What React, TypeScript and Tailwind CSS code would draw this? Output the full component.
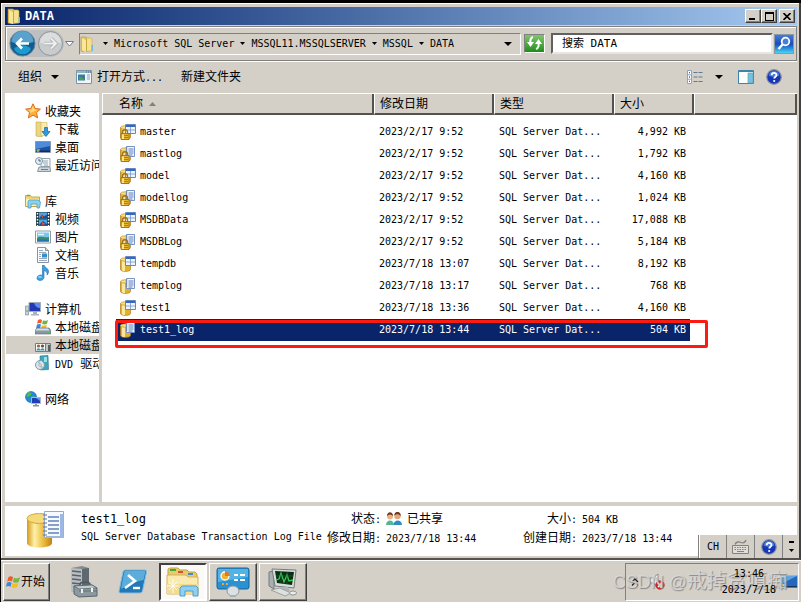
import type { ReactNode } from 'react';

type IconProps = { className?: string };

const files = [
  { name: 'master', date: '2023/2/17 9:52', size: '4,992 KB', log: false, locked: true },
  { name: 'mastlog', date: '2023/2/17 9:52', size: '1,792 KB', log: true, locked: true },
  { name: 'model', date: '2023/2/17 9:52', size: '4,160 KB', log: false, locked: true },
  { name: 'modellog', date: '2023/2/17 9:52', size: '1,024 KB', log: true, locked: true },
  { name: 'MSDBData', date: '2023/2/17 9:52', size: '17,088 KB', log: false, locked: true },
  { name: 'MSDBLog', date: '2023/2/17 9:52', size: '5,184 KB', log: true, locked: true },
  { name: 'tempdb', date: '2023/7/18 13:07', size: '8,192 KB', log: false, locked: false },
  { name: 'templog', date: '2023/7/18 13:17', size: '768 KB', log: true, locked: false },
  { name: 'test1', date: '2023/7/18 13:36', size: '4,160 KB', log: false, locked: false },
  { name: 'test1_log', date: '2023/7/18 13:44', size: '504 KB', log: true, locked: false },
];

const crumbs = ['Microsoft SQL Server', 'MSSQL11.MSSQLSERVER', 'MSSQL', 'DATA'];

const raised =
  'border border-t-white border-l-white border-r-[#404040] border-b-[#404040] bg-[#d4d0c8] shadow-[inset_-1px_-1px_0_#808080]';

const Latin = ({ children }: { children: ReactNode }) => (
  <span className="text-[10px]">{children}</span>
);

const Caret = ({ className = '' }: IconProps) => (
  <svg viewBox="0 0 8 4" className={`h-1 w-2 shrink-0 ${className}`} aria-hidden>
    <path d="M0 0h8L4 4z" fill="currentColor" />
  </svg>
);

const SmallCaret = () => (
  <svg width="5" height="3" viewBox="0 0 5 3" className="shrink-0" aria-hidden>
    <path d="M0 0h5L2.500 3z" fill="#000" />
  </svg>
);

const FolderIcon = () => (
  <svg width="16" height="16" viewBox="0 0 16 16" className="shrink-0" aria-hidden>
    <path d="M1 1h5l1 1v13l-2 1-4-1z" fill="#e3c65c" stroke="#b8942f" strokeWidth=".6" />
    <path d="M6 2h5l1 1v12l-6 .5z" fill="#f5e08c" stroke="#c9a440" strokeWidth=".6" />
    <path d="M2 2l4 2v12l-4-1.500z" fill="#f8e798" />
    <path d="M6.500 3v12" stroke="#b8942f" strokeWidth=".7" />
    <path d="M11.500 9h1.500v6h-1.500z" fill="#6cb7e4" />
  </svg>
);

const DbIcon = ({ log, locked }: { log: boolean; locked: boolean }) => (
  <svg width="16" height="16" viewBox="0 0 16 16" className="shrink-0" aria-hidden>
    <path d="M.5 3.500v10c0 2.500 10 2.500 10 0v-10z" fill="#e3b02f" stroke="#b07d13" strokeWidth=".7" />
    <path d="M2 4v10.500c1 .5 2 .5 3 .5V4z" fill="#fbe79a" />
    <ellipse cx="5.500" cy="3.500" rx="5" ry="1.800" fill="#f7dc80" stroke="#bd8c20" strokeWidth=".6" />
    {log ? (
      <>
        <path d="M6.500.5h8v10h-8z" fill="#f4f8ff" stroke="#7593c9" />
        <path d="M8.500 3h5M8.500 5h5M8.500 7h5M8.500 9h4" stroke="#4a6fae" strokeWidth=".9" />
        <path d="M5.500 2h2M5.500 4h2M5.500 6h2M5.500 8h2" stroke="#777" strokeWidth=".7" />
      </>
    ) : (
      <>
        <path d="M5.500.5h10v9h-10z" fill="#eef5ff" stroke="#6686be" />
        <path d="M6 1h9v2H6z" fill="#3768c1" />
        <path d="M10.500 3v6M6 6h9" stroke="#7f9fd0" strokeWidth=".9" />
      </>
    )}
    {locked && (
      <>
        <path d="M2.500 10V8c0-3 5-3 5 0v2" fill="none" stroke="#a07414" strokeWidth="1.400" />
        <path d="M1 9.500h8v6H1z" fill="#e9b52f" stroke="#94690f" strokeWidth=".8" />
        <path d="M2 10.500h2v4.500H2z" fill="#fbe48a" />
        <path d="M4 11.500h4M4 13.500h4" stroke="#94690f" strokeWidth=".7" />
      </>
    )}
  </svg>
);

const StarIcon = () => (
  <svg width="16" height="16" viewBox="0 0 16 16" aria-hidden>
    <path d="M8 .8l2.200 4.700 5.200.6-3.900 3.500 1.100 5.300L8 12.200l-4.600 2.700 1.100-5.300L.6 6.100l5.200-.6z" fill="#ffae38" stroke="#e56a1c" />
    <path d="M8 3l1.300 3.500 3 .5L5 10l.4-2L3 7l3.500-.5z" fill="#ffdc78" />
  </svg>
);

const DownloadIcon = () => (
  <svg width="16" height="16" viewBox="0 0 16 16" aria-hidden>
    <path d="M1 1h5l1 1v14l-6-1z" fill="#ecd680" stroke="#c6a74a" strokeWidth=".6" />
    <path d="M6 1.500h6V14l-6 1z" fill="#faecb2" stroke="#d0b45b" strokeWidth=".6" />
    <path d="M9.500 6.500h3v4h2.500L11 15.500l-4-5h2.500z" fill="#2f9ae0" stroke="#1665a6" strokeWidth=".7" />
  </svg>
);

const DesktopIcon = () => (
  <svg width="16" height="14" viewBox="0 0 16 14" aria-hidden>
    <path d="M.5 1.500h15v11H.5z" fill="#1d53a7" stroke="#8497ae" />
    <path d="M1 2h14v4L1 9z" fill="#4e8bd8" />
    <path d="M1 10.500h14v1.500H1z" fill="#1b2d55" />
    <circle cx="3" cy="10.500" r="1.500" fill="#69c46c" />
    <path d="M3 9h2v1.500H3z" fill="#f06b2d" />
  </svg>
);

const RecentIcon = () => (
  <svg width="16" height="16" viewBox="0 0 16 16" aria-hidden>
    <path d="M6 1.500h9v8H6z" fill="#f4f8fb" stroke="#96a5b2" />
    <path d="M8 4h5M8 6h5M9 8h4" stroke="#7792a8" strokeWidth=".8" />
    <path d="M4 10h11l.5 4.500h-13z" fill="#cdd7df" stroke="#8a97a2" />
    <path d="M6 12.500h7" stroke="#6d7c87" />
    <circle cx="4" cy="4" r="3.500" fill="#e4edf4" stroke="#8195a6" />
    <path d="M4 2v2h2" fill="none" stroke="#49647a" />
  </svg>
);

const LibraryIcon = () => (
  <svg width="16" height="16" viewBox="0 0 16 16" aria-hidden>
    <path d="M.5 2.500h5l1 1.500h8v9.500H.5z" fill="#f2d777" stroke="#c7a64a" />
    <path d="M2 2.500h3" stroke="#5fb54a" strokeWidth="1.500" />
    <path d="M1 6h13v7H1z" fill="#fcefb8" />
    <path d="M4 7h9l2.500 2-1 6h-2.500v-4H6v4H3V9z" fill="#8dd1f2" stroke="#499fc9" strokeWidth=".8" />
  </svg>
);

const VideoIcon = () => (
  <svg width="16" height="16" viewBox="0 0 16 16" aria-hidden>
    <path d="M1 1h14v14H1z" fill="#24404e" />
    <path d="M4 1.500h8v6H4zM4 8.500h8v6H4z" fill="#4aa7df" />
    <path d="M4 7.500l3-4 2 2 3-2v4zM4 14l4-4 4 3v1.500H4z" fill="#1c4d91" />
    <path d="M5 3l3 2v2.500zM7 11l4 2-4 1z" fill="#e2522b" />
    <path d="M2.500 2v13M13.500 2v13" stroke="#fff" strokeWidth="1.400" strokeDasharray="1.500 1.500" />
  </svg>
);

const PictureIcon = () => (
  <svg width="16" height="14" viewBox="0 0 16 14" aria-hidden>
    <path d="M.5 1h15v12H.5z" fill="#fff" stroke="#8e9aa3" />
    <path d="M2 2.500h12v9H2z" fill="#79c6ed" />
    <path d="M2 8c3-3 6 0 12-1v4.500H2z" fill="#3b8a69" />
    <path d="M2 9.500c4-1 8 1 12 0v2H2z" fill="#2476ae" />
    <path d="M3 4.500h6" stroke="#e8f8ff" strokeWidth="1.500" />
  </svg>
);

const DocumentIcon = () => (
  <svg width="16" height="16" viewBox="0 0 16 16" aria-hidden>
    <path d="M2.500.5h8l3 3v12h-11z" fill="#fafcff" stroke="#8594a2" />
    <path d="M10.500.5v3h3" fill="#ccd6de" stroke="#8594a2" />
    <path d="M4 3.500h4M4 5.500h7M4 7.500h2M4 9.500h2M4 11.500h8M4 13.500h8" stroke="#8093a7" strokeWidth=".8" />
    <path d="M7 6.500h5v4H7z" fill="#3690c8" />
  </svg>
);

const MusicIcon = () => (
  <svg width="16" height="16" viewBox="0 0 16 16" aria-hidden>
    <path d="M7.500 0h1.500c.5 3 5 3 4.500 7-.2 1.500-1 2.500-1.500 3 .8-3-1.500-4-3-4.500v7c0 3.500-7 4-7 .7C2 10.500 5 9.500 7.500 10.200z" fill="#35a3e3" stroke="#1c6bac" strokeWidth=".6" />
    <ellipse cx="5" cy="12" rx="2" ry="1" fill="#8ed5f8" />
  </svg>
);

const ComputerIcon = () => (
  <svg width="16" height="16" viewBox="0 0 16 16" aria-hidden>
    <path d="M.5 5h3v9h-3z" fill="#c7d0da" stroke="#82909e" strokeWidth=".7" />
    <path d="M1 10h2" stroke="#45b946" />
    <path d="M4 1.500h11.500v9H4z" fill="#2439b4" stroke="#a1adbb" />
    <path d="M9 2h6v5c-3 0-5-2-6-5z" fill="#5f8cf1" />
    <path d="M8 11h4v2H8zM6 13h8v1.500H6z" fill="#aab4bf" />
  </svg>
);

const Flag = ({ className = 'h-4 w-4' }: IconProps) => (
  <svg viewBox="0 0 16 16" className={`shrink-0 ${className}`} aria-hidden>
    <path d="M2.500 3c2-1.500 3.500-1.200 5 0L6.300 7.500c-1.700-1-3-1-5 .2z" fill="#ee5b28" />
    <path d="M8.500 3.500c2 1 4 1 6.500-.5l-1.300 4.700c-2 1.300-4.200 1.300-6.400.3z" fill="#76b93e" />
    <path d="M1 8.800c2-1.300 3.500-1 5-.1L4.800 13C3.300 12 2 12 0 13z" fill="#3d86d9" />
    <path d="M7 9.200c2.200 1 4.300.8 6.400-.4L12 13.300c-2 1.400-4.200 1.200-6.300.2z" fill="#f9bd24" />
  </svg>
);

const SystemDriveIcon = () => (
  <svg width="16" height="16" viewBox="0 0 16 16" aria-hidden>
    <path d="M3 1c1.500-1 3-1 4 0l-.8 3.500C5 3.700 3.500 3.700 2 4.500z" fill="#ec602a" />
    <path d="M8 1.300c1.500.8 3 .8 5-.3l-1 3.700c-1.500 1-3.500.8-4.900.1z" fill="#71b442" />
    <path d="M2 5.500c1.500-.8 3-.8 4 0L5.200 9 1 9.500z" fill="#3c88d5" />
    <path d="M6.900 6c1.500.8 3.400.7 4.900-.2L11 10H6z" fill="#f5bc2d" />
    <path d="M2 9h12l2 2.500v3.500H0v-3.500z" fill="#8998a4" stroke="#596a76" strokeWidth=".6" />
    <path d="M2 9.500h11l1.500 2h-14z" fill="#d4dde3" />
    <path d="M12 13h2" stroke="#41d347" strokeWidth="1.500" />
  </svg>
);

const SharedDriveIcon = () => (
  <svg width="16" height="16" viewBox="0 0 16 16" aria-hidden>
    <path d="M9 6.500h6.500v8H9z" fill="#bfc6c7" stroke="#747e80" />
    <path d="M13 8h2v6h-2z" fill="#56605c" />
    <path d="M.5 6.500h10v8H.5z" fill="#f9fbfa" stroke="#6e7f80" />
    <circle cx="3.500" cy="9" r="1.600" fill="#976044" />
    <circle cx="7.500" cy="9" r="1.600" fill="#77442f" />
    <path d="M1.500 13.500c0-3 4-3 4 0zM5.500 13.500c0-3 4-3 4 0z" fill="#4697a1" />
  </svg>
);

const DvdIcon = () => (
  <svg width="16" height="16" viewBox="0 0 16 16" aria-hidden>
    <path d="M5 1l8-.5.5 14-8 .5z" fill="#39a8bd" stroke="#1b7388" strokeWidth=".6" />
    <path d="M9 2h3v5H9z" fill="#9ae0e5" />
    <circle cx="5" cy="10" r="4.500" fill="#dce4e9" stroke="#8498a5" />
    <path d="M5 10L2 6.500 5 6zM5 10l3.500 2L6 14z" fill="#9fc8de" />
    <circle cx="5" cy="10" r="1.300" fill="#fff" stroke="#8498a5" strokeWidth=".7" />
  </svg>
);

const NetworkIcon = () => (
  <svg width="16" height="16" viewBox="0 0 16 16" aria-hidden>
    <circle cx="6" cy="6" r="5.500" fill="#2389db" stroke="#1c5c9c" strokeWidth=".6" />
    <path d="M3 1.500c3-1 4 1 3 2.500L3 6 1 5zM6 6c3-2 5 0 4 2L7 11z" fill="#53bd42" />
    <path d="M6.500 6.500h9v6h-9z" fill="#1d3fb8" stroke="#aeb9c6" />
    <path d="M10 13h2v1h2v1.500H8V14h2z" fill="#8794a2" />
    <path d="M11 7h4v3z" fill="#6496ef" />
  </svg>
);

const places = [
  {
    label: '收藏夹',
    icon: <StarIcon />,
    items: [
      { label: '下载', icon: <DownloadIcon /> },
      { label: '桌面', icon: <DesktopIcon /> },
      { label: '最近访问的位置', icon: <RecentIcon /> },
    ],
  },
  {
    label: '库',
    icon: <LibraryIcon />,
    items: [
      { label: '视频', icon: <VideoIcon /> },
      { label: '图片', icon: <PictureIcon /> },
      { label: '文档', icon: <DocumentIcon /> },
      { label: '音乐', icon: <MusicIcon /> },
    ],
  },
  {
    label: '计算机',
    icon: <ComputerIcon />,
    items: [
      { label: '本地磁盘', icon: <SystemDriveIcon /> },
      { label: '本地磁盘', icon: <SharedDriveIcon />, active: true },
      { label: <><Latin>DVD</Latin> 驱动器</>, icon: <DvdIcon /> },
    ],
  },
  { label: '网络', icon: <NetworkIcon />, items: [] },
];

const HelpIcon = ({ className = 'h-4 w-4' }: IconProps) => (
  <svg viewBox="0 0 16 16" className={className} aria-hidden>
    <circle cx="8" cy="8" r="7.300" fill="#1736b5" stroke="#8d949f" strokeWidth="1.200" />
    <path d="M2.500 6.500a5.600 5.600 0 0 1 11 0c-3 1.500-7 2-11 0z" fill="#4d7ce2" />
    <path d="M5.700 6.200c0-3 4.800-3 4.800-.2 0 1.700-2.300 1.700-2.300 3.600" fill="none" stroke="#fff" strokeWidth="1.800" />
    <circle cx="8.200" cy="12" r="1.100" fill="#fff" />
  </svg>
);

const UsersIcon = () => (
  <svg width="16" height="14" viewBox="0 0 16 14" aria-hidden>
    <path d="M0 13c0-6 8-6 8 0z" fill="#55b596" />
    <path d="M7.500 13c0-6 8.500-6 8.500 0z" fill="#2f8bc3" />
    <circle cx="4" cy="4.500" r="3" fill="#e9b48c" />
    <circle cx="11.500" cy="4" r="3.200" fill="#e2a67b" />
    <path d="M1 4c0-5 6-5 6 0-2-2-4-2-6 0zM8.300 3.500c0-5 6.500-5 6.500.5-2-2-4-2.500-6.500-.5z" fill="#6f3a22" />
  </svg>
);

const LogFileIcon = () => (
  <svg width="39" height="40" viewBox="0 0 39 40" className="shrink-0" aria-hidden>
    <defs>
      <linearGradient id="gold">
        <stop offset="0" stopColor="#d49a1d" />
        <stop offset=".3" stopColor="#fff0a6" />
        <stop offset=".7" stopColor="#e8b635" />
        <stop offset="1" stopColor="#bd8115" />
      </linearGradient>
    </defs>
    <path d="M1 9v24c0 6 25 6 25 0V9z" fill="url(#gold)" />
    <ellipse cx="13.500" cy="8.500" rx="12.500" ry="5" fill="#f5da7b" stroke="#d5a83a" />
    <path d="M18.500 1.500h19v26h-19z" fill="#f6f9ff" stroke="#8fabd5" />
    <path d="M34 4h3.500v24H20v-2h14z" fill="#9db8e2" />
    <path d="M22 7h11M22 11h11M22 15h11M22 19h11M22 23h11" stroke="#6382b5" strokeWidth="1.500" />
    <path d="M17 5h4M17 9h4M17 13h4M17 17h4M17 21h4M17 25h4" stroke="#6b7280" />
  </svg>
);

const ServerManagerIcon = () => (
  <svg width="30" height="32" viewBox="0 0 30 32" aria-hidden>
    <path d="M2 2l11-2 7 2v23l-7 3-11-3z" fill="#858b90" />
    <path d="M2 2l11 1v24L2 25z" fill="#b7bdc0" />
    <path d="M3 5l9 1M3 9l9 1M3 13l9 1M3 17l9 1" stroke="#596168" strokeWidth="1.500" />
    <path d="M13 3l7-1v23l-7 2z" fill="#5f686e" />
    <path d="M4 21h3" stroke="#50bc59" strokeWidth="1.500" />
    <path d="M11 20v-2c0-2 10-3 10 0v2" fill="none" stroke="#4f5961" strokeWidth="1.600" />
    <path d="M5 20l18-1 5 3v8l-18 1-5-3z" fill="#8c999f" stroke="#5a676f" />
    <path d="M5 20l5 3 18-1-5-3zM10 25h18" fill="#c3cbce" stroke="#59666e" strokeWidth=".8" />
    <path d="M13 23v4M23 22v4" stroke="#eef2f2" strokeWidth="2" />
  </svg>
);

const PowerShellIcon = () => (
  <svg width="30" height="26" viewBox="0 0 30 26" aria-hidden>
    <path d="M7 1h20q2 0 1.500 2l-4 19q-.5 2-2.500 2H2.500q-2 0-1.500-2L5 3q.5-2 2-2z" fill="#2179b8" stroke="#87bddd" />
    <path d="M7 2h20.500l-2 9C18 12 11 15 3 20L6 4z" fill="#5baedb" />
    <path d="M10 6l7 6-10 7" fill="none" stroke="#fff" strokeWidth="2.600" />
    <path d="M15 19h7" stroke="#fff" strokeWidth="2.400" />
  </svg>
);

const ExplorerIcon = () => (
  <svg width="34" height="30" viewBox="0 0 34 30" aria-hidden>
    <path d="M2 5V2l2-1h8l2 2h7l2 2h6l2 2v18H2z" fill="#e8cc6c" stroke="#c4a147" />
    <path d="M4 3h6" stroke="#3caa41" strokeWidth="2" />
    <path d="M12 5h5" stroke="#db4c39" strokeWidth="2" />
    <path d="M22 7h5" stroke="#3d8bd0" strokeWidth="2" />
    <path d="M1 8h19l2 2h10v17H1z" fill="#fbeab0" stroke="#d1b15c" />
    <path d="M1 17h31v10H1z" fill="#f3dc90" />
    <path d="M14 29v-8l2-2h14l2 2v8h-5v-5h-8v5z" fill="#8fd0f0" stroke="#4a9fcb" />
    <path d="M7 12v14M1 19h12M3 15l8 8M11 15l-8 8" stroke="#fff" strokeWidth=".9" />
  </svg>
);

const ControlPanelIcon = () => (
  <svg width="34" height="30" viewBox="0 0 34 30" aria-hidden>
    <rect x="1" y="1" width="32" height="21" rx="2" fill="#2992d2" stroke="#176299" />
    <path d="M2 2h30v8L2 15z" fill="#55b2e5" />
    <circle cx="9" cy="9" r="4" fill="#f2b22d" stroke="#fff" strokeWidth="1.300" />
    <path d="M9 9V4a5 5 0 0 1 5 5z" fill="#e57729" />
    <path d="M18 8h4M18 13h4M24 8h5M24 13h5" stroke="#fff" strokeWidth="2" />
    <path d="M6 17h2M10 17h2" stroke="#f7a51e" strokeWidth="2" />
    <ellipse cx="17" cy="24" rx="6" ry="5" fill="#dce1e5" stroke="#8d989f" />
    <path d="M14 28h6v2h-6z" fill="#a9b1b7" />
  </svg>
);

const MonitorIcon = () => (
  <svg width="32" height="30" viewBox="0 0 32 30" aria-hidden>
    <path d="M2 5l5-1v18l-5-3z" fill="#aab0b2" stroke="#737b7d" />
    <path d="M5 2l24 1-2 18-19-2z" fill="#d9dddb" stroke="#747d7b" />
    <path d="M8 4l19 1-2 13-15-2z" fill="#092d16" />
    <path d="M9 13l3-1 2-6 3 9 3-7 2 6 4-1" fill="none" stroke="#36ce50" strokeWidth="1.300" />
    <path d="M9 9h17M14 5v11M20 5v12" stroke="#237038" strokeWidth=".6" />
    <path d="M15 20h6l2 4-5 3-6-3z" fill="#b1b7b7" />
    <path d="M4 23l9-2 11 5-6 3z" fill="#dde0df" stroke="#8c9493" strokeWidth=".8" />
    <ellipse cx="26" cy="26" rx="3.500" ry="2" fill="#e9eceb" stroke="#8c9493" />
  </svg>
);

const TitleBar = () => (
  <div className="flex h-[18px] items-center bg-linear-to-r from-[#0a246a] to-[#a6caf0] pr-0.5 pl-0.5 text-white">
    <FolderIcon />
    <h1 className="flex-1 pl-0.5 text-xs leading-[18px] font-bold">DATA</h1>
    <button type="button" aria-label="最小化" className={`flex h-3.5 w-4 items-end pb-0.5 pl-[3px] ${raised}`}>
      <span className="h-0.5 w-1.5 bg-black" />
    </button>
    <button type="button" aria-label="最大化" className={`flex h-3.5 w-4 items-center justify-center ${raised}`}>
      <span className="h-[9px] w-[9px] border border-t-2 border-black" />
    </button>
    <button type="button" aria-label="关闭" className={`ml-0.5 flex h-3.5 w-4 items-center justify-center ${raised}`}>
      <svg width="8" height="7" viewBox="0 0 8 7" aria-hidden>
        <path d="M.5 0l7 7M7.500 0l-7 7" stroke="#000" strokeWidth="1.600" />
      </svg>
    </button>
  </div>
);

const AddressBar = () => (
  <div className="mt-px flex h-[35px] items-center border border-[#808080] pr-0.5 pl-[3px] shadow-[inset_1px_1px_0_#fff,0_1px_0_#fff]">
    <div className="flex rounded-full bg-[#bdbfc2]">
      <button type="button" aria-label="后退">
        <svg width="27" height="27" viewBox="0 0 27 27" aria-hidden>
          <circle cx="13.500" cy="13.500" r="12.500" fill="#105b8f" stroke="#65839a" />
          <path d="M2.500 12a11 11 0 0 1 22 0c-7 2-15 2-22 0z" fill="#5aa2cb" />
          <path d="M5 19c4-5 13-5 17 0-3 7-14 7-17 0z" fill="#1d9bd1" />
          <path d="M20 13.500H9M13 8.500l-5 5 5 5" fill="none" stroke="#fff" strokeWidth="2.600" />
        </svg>
      </button>
      <button type="button" aria-label="前进" className="ml-px">
        <svg width="27" height="27" viewBox="0 0 27 27" aria-hidden>
          <circle cx="13.500" cy="13.500" r="12" fill="#c9cbcc" stroke="#8e979e" />
          <path d="M3 13a10.500 10.500 0 0 1 21 0z" fill="#dcdddd" />
          <path d="M7 13.500h11M14 8.500l5 5-5 5" fill="none" stroke="#a6abae" strokeWidth="3.600" />
          <path d="M7 13.500h11M14 8.500l5 5-5 5" fill="none" stroke="#eeefef" strokeWidth="2" />
        </svg>
      </button>
    </div>
    <button type="button" aria-label="最近的页面" className="ml-px">
      <svg width="9" height="6" viewBox="0 0 9 6" aria-hidden>
        <path d="M.5.5h8l-4 4.500z" fill="#fff" stroke="#6f7c90" />
      </svg>
    </button>
    <div className="ml-[5px] flex h-[22px] flex-1 items-center border border-t-[#808080] border-r-white border-b-white border-l-[#808080] pr-2">
      <FolderIcon />
      <nav aria-label="地址" className="flex flex-1 items-center pl-px">
        {crumbs.map((crumb) => (
          <span key={crumb} className="flex items-center">
            <span className="flex w-[17px] justify-center">
              <SmallCaret />
            </span>
            <a href="#" className="text-[10px] whitespace-nowrap">
              {crumb}
            </a>
          </span>
        ))}
      </nav>
      <button type="button" aria-label="上一个位置">
        <Caret />
      </button>
    </div>
    <button
      type="button"
      aria-label="刷新"
      className="ml-[3px] flex h-[19px] w-[21px] items-center justify-center border border-t-[#808080] border-r-white border-b-white border-l-[#808080] bg-linear-to-b from-[#80c56e] to-[#159012]"
    >
      <svg width="17" height="15" viewBox="0 0 17 15" aria-hidden>
        <path d="M7 1C4 2 4 4 4.500 7M10 13c3-1 3-3 2.500-6" fill="none" stroke="#fff" strokeWidth="2" />
        <path d="M1 6h7l-3.500 5zM9 8h7l-3.500-5z" fill="#fff" />
      </svg>
    </button>
    <input
      type="text"
      aria-label="搜索 DATA"
      placeholder="搜索 DATA"
      className="ml-1.5 h-[21px] w-[222px] border-2 border-t-[#606060] border-r-[#e8e6e2] border-b-[#e8e6e2] border-l-[#606060] bg-white pl-[9px] text-[11px] text-black outline-none placeholder:text-black placeholder:opacity-100"
    />
    <button
      type="button"
      aria-label="搜索"
      className="ml-px flex h-5 w-5 items-center justify-center border border-[#8b98a6] bg-linear-to-b from-[#477bd7] via-[#194bbd] to-[#4fd2f4]"
    >
      <svg width="15" height="15" viewBox="0 0 15 15" aria-hidden>
        <circle cx="8.500" cy="5.500" r="3.800" fill="#467ed8" stroke="#fff" strokeWidth="1.800" />
        <path d="M5.500 8.500L1.500 13" stroke="#fff" strokeWidth="2.400" />
      </svg>
    </button>
  </div>
);

const Toolbar = () => (
  <div className="flex h-8 items-center pr-[15px] pl-[13px] text-xs">
    <button type="button" className="flex items-center gap-[9px]">
      组织
      <Caret />
    </button>
    <button type="button" className="ml-[17px] flex items-center gap-[5px]">
      <svg width="16" height="14" viewBox="0 0 16 14" aria-hidden>
        <path d="M.5.5h15v13H.5z" fill="#f2f5f7" stroke="#7896a9" />
        <path d="M1 1h14v2H1z" fill="#9ab3c3" />
        <path d="M10 2h1M12 2h1M14 2h1" stroke="#3f607c" />
        <path d="M2 4.500h7v6H2z" fill="#347b9f" />
        <path d="M3 6l5 3v1H3z" fill="#4d9b5a" />
        <path d="M11 5h3M11 7h3M11 9h3" stroke="#81a0b5" />
      </svg>
      <span>
        打开方式<Latin>...</Latin>
      </span>
    </button>
    <button type="button" className="ml-[18px]">
      新建文件夹
    </button>
    <div className="ml-auto flex items-center">
      <button type="button" aria-label="更改您的视图" className="flex items-center gap-3">
        <svg width="16" height="14" viewBox="0 0 16 14" aria-hidden>
          <path d="M.5.5h4v13h-4zM.5 4.800h4M.5 9.200h4" fill="#fff" stroke="#8aa5bf" />
          <path d="M2 2.700h1M2 11.300h1" stroke="#2867a7" strokeWidth="1.300" />
          <path d="M2 7h1" stroke="#d92918" strokeWidth="1.300" />
          <path d="M6.500 2.500h4M11.500 2.500h4M6.500 7h4M11.500 7h4M6.500 11.500h4M11.500 11.500h4" stroke="#5e7996" />
        </svg>
        <Caret />
      </button>
      <button type="button" aria-label="显示预览窗格" className="ml-[15px]">
        <svg width="16" height="14" viewBox="0 0 16 14" aria-hidden>
          <path d="M.5.5h15v13H.5z" fill="#fff" stroke="#3d84ad" />
          <path d="M1 1.500h14" stroke="#3d84ad" />
          <path d="M10 3h5v10h-5z" fill="#70c4e1" stroke="#6c9eb5" strokeWidth=".7" />
        </svg>
      </button>
      <button type="button" aria-label="获取帮助" className="ml-3">
        <HelpIcon />
      </button>
    </div>
  </div>
);

const Sidebar = () => (
  <nav className="w-[94px] shrink-0 overflow-hidden bg-white pt-[9px] text-xs leading-5 whitespace-nowrap">
    {places.map(({ label, icon, items }, index) => (
      <div key={index} className="mb-[18px]">
        <a href="#" className="flex h-[18px] items-start gap-1 pl-5">
          <span className="flex h-[18px] w-4 shrink-0 items-center justify-center">{icon}</span>
          <span>{label}</span>
        </a>
        {items.map((item, i) => (
          <a
            key={i}
            href="#"
            className={`ml-px flex h-[18px] items-start gap-1 pl-[29px] ${'active' in item ? 'bg-[#d4d0c8]' : ''}`}
          >
            <span className="flex h-[18px] w-4 shrink-0 items-center justify-center">{item.icon}</span>
            <span>{item.label}</span>
          </a>
        ))}
      </div>
    ))}
  </nav>
);

const headCell =
  'flex h-[22px] items-center gap-1.5 border-t border-b-2 border-l border-t-white border-b-[#55524d] border-l-white pl-[5px] shadow-[inset_-2px_0_0_#55524d]';

const FileTable = () => (
  <div className="min-w-0 flex-1 overflow-hidden bg-white">
    <table className="w-full table-fixed border-collapse text-left">
      <colgroup>
        <col className="w-[272px]" />
        <col className="w-[120px]" />
        <col className="w-[120px]" />
        <col className="w-20" />
        <col />
      </colgroup>
      <thead className="text-xs">
        <tr className="h-7 bg-white align-top">
          <th className="p-0 font-normal">
            <div className={`${headCell} bg-[#d4d0c8]`}>
              <span className="pl-[11px]">名称</span>
              <svg width="7" height="4" viewBox="0 0 7 4" aria-hidden>
                <path d="M0 4h7L3.500 0z" fill="#808080" />
              </svg>
            </div>
          </th>
          {['修改日期', '类型', '大小', ''].map((label) => (
            <th key={label} className="p-0 font-normal">
              <div className={`${headCell} bg-[#d4d0c8]`}>{label}</div>
            </th>
          ))}
        </tr>
      </thead>
      <tbody className="text-[10px] leading-[22px]">
        {files.map(({ name, date, size, log, locked }) => {
          const selected = name === 'test1_log';
          const fill = selected ? 'bg-[#0a246a] text-white' : '';
          return (
            <tr key={name} className="relative">
              <td className="p-0">
                <div className={`ml-3.5 flex h-[22px] items-center gap-1 pl-1 ${fill}`}>
                  <DbIcon log={log} locked={locked} />
                  <span>{name}</span>
                </div>
                {selected && (
                  <div className="pointer-events-none absolute top-px left-[13px] h-7 w-[593px] rounded-xs border-3 border-[#fb1b12]" />
                )}
              </td>
              <td className={`h-[22px] p-0 pl-[5px] ${fill}`}>{date}</td>
              <td className={`h-[22px] p-0 pl-[5px] ${fill}`}>SQL Server Dat...</td>
              <td className="p-0">
                <div className={`mr-1 h-[22px] pr-1 text-right ${fill}`}>{size}</div>
              </td>
              <td className="p-0" />
            </tr>
          );
        })}
      </tbody>
    </table>
  </div>
);

const DetailsPane = () => (
  <footer className="mt-1 flex h-[50px] bg-white pt-1 pl-[21px] text-xs leading-[18px] whitespace-nowrap">
    <LogFileIcon />
    <div className="ml-4 w-[241px]">
      <h2>test1_log</h2>
      <p className="text-[10px] leading-[18px]">SQL Server Database Transaction Log File</p>
    </div>
    <dl className="ml-1 grid w-[192px] grid-cols-[55px_1fr] content-start gap-x-[5px]">
      <dt className="text-right">状态<Latin>:</Latin></dt>
      <dd className="flex h-[18px] items-center gap-[5px]">
        <UsersIcon />
        已共享
      </dd>
      <dt className="text-right">修改日期<Latin>:</Latin></dt>
      <dd className="h-[18px]"><Latin>2023/7/18 13:44</Latin></dd>
    </dl>
    <dl className="ml-1 grid grid-cols-[55px_1fr] content-start gap-x-[5px]">
      <dt className="text-right">大小<Latin>:</Latin></dt>
      <dd className="h-[18px]"><Latin>504 KB</Latin></dd>
      <dt className="text-right">创建日期<Latin>:</Latin></dt>
      <dd className="h-[18px]"><Latin>2023/7/18 13:44</Latin></dd>
    </dl>
  </footer>
);

const LanguageBar = () => (
  <div className="absolute right-0 bottom-0 flex h-[23px] w-[101px] border-l border-[#808080] bg-[#d4d0c8] text-[10px]">
    <button type="button" className="w-7 border-r border-l border-r-[#808080] border-l-white">
      CH
    </button>
    <button type="button" aria-label="键盘" className="flex w-7 items-center justify-center border-r border-[#808080]">
      <svg width="17" height="15" viewBox="0 0 17 15" aria-hidden>
        <path d="M.5 6.500h16v8H.5z" fill="#deddd9" stroke="#85827d" />
        <path d="M2.500 8.500h12M2.500 10.500h12" stroke="#85827d" strokeDasharray="1.500 1" />
        <path d="M5 12.500h7" stroke="#85827d" />
        <path d="M3 5.500c1-3 4-3 6-2 2 .8 4 0 5-2.500" fill="none" stroke="#85827d" strokeWidth="1.300" />
      </svg>
    </button>
    <button type="button" aria-label="帮助" className="flex w-7 items-center justify-center border-r border-[#808080]">
      <HelpIcon />
    </button>
    <button type="button" aria-label="选项" className="flex flex-1 flex-col items-center justify-center gap-1.5">
      <span className="h-0.5 w-[5px] bg-black" />
      <SmallCaret />
    </button>
  </div>
);

const Taskbar = () => (
  <div className="relative flex h-[42px] shrink-0 items-center border-t border-white bg-[#d4d0c8] pr-0.5 pl-0.5">
    <button type="button" className={`flex h-[38px] w-[47px] items-center text-xs ${raised}`}>
      <span className="pl-0.5">
        <Flag className="h-4 w-[15px]" />
      </span>
      开始
    </button>
    <button type="button" aria-label="服务器管理器" className="ml-[19px]">
      <ServerManagerIcon />
    </button>
    <button type="button" aria-label="PowerShell" className="ml-[19px]">
      <PowerShellIcon />
    </button>
    <button
      type="button"
      aria-label="资源管理器"
      className="ml-[11px] flex h-[38px] w-12 items-center justify-center border-2 border-t-[#404040] border-r-white border-b-white border-l-[#404040] bg-[#fbfaf8]"
    >
      <ExplorerIcon />
    </button>
    <button type="button" aria-label="控制面板" className={`ml-0.5 flex h-[38px] w-12 items-center justify-center ${raised}`}>
      <ControlPanelIcon />
    </button>
    <button type="button" aria-label="性能监视器" className={`ml-0.5 flex h-[38px] w-12 items-center justify-center ${raised}`}>
      <MonitorIcon />
    </button>
    <div className="ml-auto flex h-[38px] w-[174px] items-center border border-t-[#808080] border-r-white border-b-white border-l-[#808080] pl-[5px]">
      <svg width="8" height="8" viewBox="0 0 8 8" aria-hidden>
        <path d="M1 4l3-3 3 3M1 7.500l3-3 3 3" fill="none" stroke="#222" strokeWidth="1.300" />
      </svg>
      <svg width="16" height="17" viewBox="0 0 16 17" className="ml-2.5" aria-hidden>
        <path d="M1 5h3l5-4v13l-5-4H1z" fill="#f6f6f5" stroke="#8b8b88" />
        <circle cx="11" cy="12" r="4.300" fill="#dd2625" stroke="#a71b18" strokeWidth=".6" />
        <path d="M9 10l4 4M13 10l-4 4" stroke="#fff" strokeWidth="1.500" />
      </svg>
      <time className="relative z-10 ml-auto text-center text-[10px] leading-4">
        13:46
        <br />
        2023/7/18
      </time>
      <svg width="18" height="14" viewBox="0 0 18 14" className="ml-1 shrink-0" aria-hidden>
        <path d="M.5.5h17v12H.5z" fill="#2667bc" stroke="#a6b2bf" />
        <path d="M1 1h16L1 9z" fill="#5fa4e4" />
        <path d="M1 11h16v1.500H1z" fill="#193765" />
        <circle cx="3" cy="10" r="1.500" fill="#f0cd45" />
      </svg>
    </div>
    <span className="pointer-events-none absolute right-3.5 bottom-1.5 font-['Liberation_Sans','Noto_Sans_CJK_SC',sans-serif] text-[20px] leading-7 whitespace-nowrap text-[#dddcda]/80 [text-shadow:1px_1px_1px_#888]">
      <span className="text-[18px]">CSDN @</span>戒掉贪嗔痴
    </span>
  </div>
);

const App = () => {
  return (
    <div className="flex min-h-screen flex-col border-t-3 border-l border-black bg-[#d4d0c8] font-['DejaVu_Sans_Mono','Noto_Sans_CJK_SC',monospace] text-black">
      <main className="relative flex flex-1 flex-col border-r-2 border-b-2 border-r-[#404040] border-b-[#55524d] shadow-[inset_0_1px_0_#fff,inset_1px_0_0_#fff]">
        <div className="flex flex-1 flex-col pt-1 pr-0.5 pb-0.5 pl-1">
          <TitleBar />
          <AddressBar />
          <Toolbar />
          <div className="flex flex-1">
            <Sidebar />
            <div className="w-[3px] shrink-0" />
            <FileTable />
          </div>
          <DetailsPane />
        </div>
        <LanguageBar />
      </main>
      <Taskbar />
    </div>
  );
};

export default App;
